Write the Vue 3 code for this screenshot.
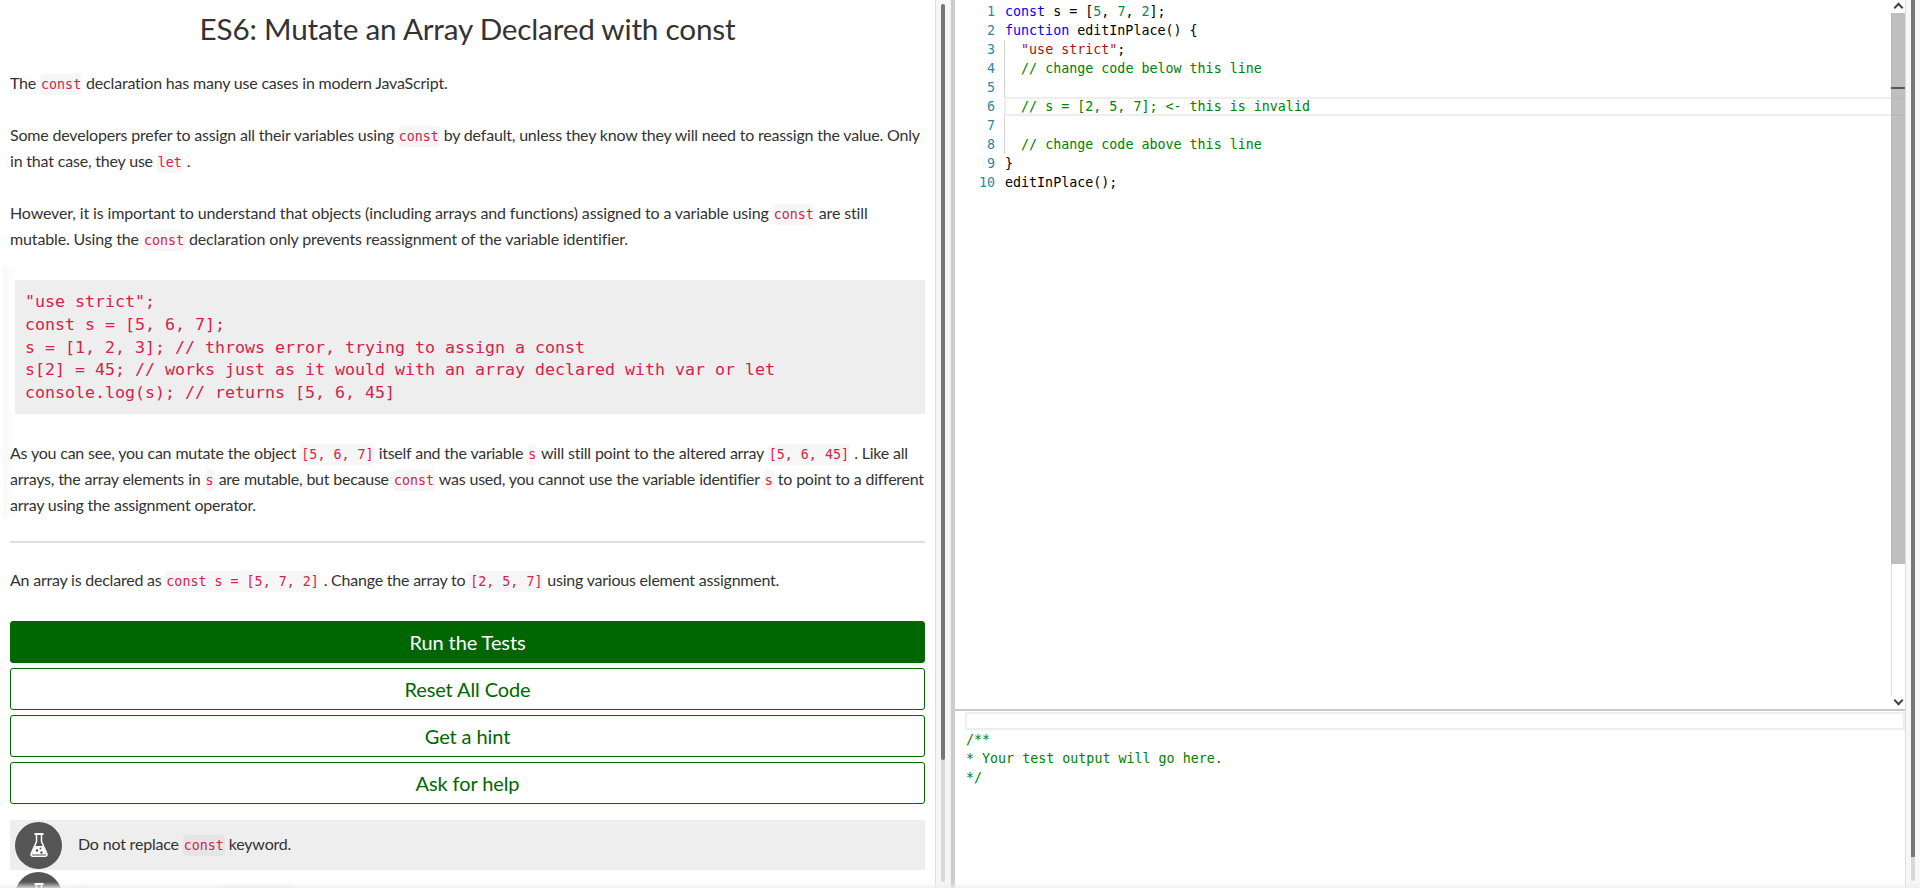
<script setup>
const lines = [
  [['k', 'const'], ['p', ' s = ['], ['n', '5'], ['p', ', '], ['n', '7'], ['p', ', '], ['n', '2'], ['p', '];']],
  [['k', 'function'], ['p', ' editInPlace() {']],
  [['p', '  '], ['s', '"use strict"'], ['p', ';']],
  [['p', '  '], ['c', '// change code below this line']],
  [['p', '']],
  [['p', '  '], ['c', '// s = [2, 5, 7]; <- this is invalid']],
  [['p', '']],
  [['p', '  '], ['c', '// change code above this line']],
  [['p', '}']],
  [['p', 'editInPlace();']],
]
const sample = `"use strict";
const s = [5, 6, 7];
s = [1, 2, 3]; // throws error, trying to assign a const
s[2] = 45; // works just as it would with an array declared with var or let
console.log(s); // returns [5, 6, 45]`
const output = ['/**', '* Your test output will go here.', '*/']
</script>

<template>
  <div class="app">
    <section class="left">
      <div class="content">
        <h1 class="title">ES6: Mutate an Array Declared with const</h1>
        <p>The <code>const</code> declaration has many use cases in modern JavaScript.</p>
        <p>Some developers prefer to assign all their variables using <code>const</code> by default, unless they know they will need to reassign the value. Only in that case, they use <code>let</code> .</p>
        <p class="before-sample">However, it is important to understand that objects (including arrays and functions) assigned to a variable using <code>const</code> are still mutable. Using the <code>const</code> declaration only prevents reassignment of the variable identifier.</p>
        <pre class="sample">{{ sample }}</pre>
        <p class="before-rule">As you can see, you can mutate the object <code>[5, 6, 7]</code> itself and the variable <code>s</code> will still point to the altered array <code>[5, 6, 45]</code> . Like all arrays, the array elements in <code>s</code> are mutable, but because <code>const</code> was used, you cannot use the variable identifier <code>s</code> to point to a different array using the assignment operator.</p>
        <hr class="rule" />
        <p class="task">An array is declared as <code>const s = [5, 7, 2]</code> . Change the array to <code>[2, 5, 7]</code> using various element assignment.</p>
        <div class="buttons">
          <button class="btn primary">Run the Tests</button>
          <button class="btn">Reset All Code</button>
          <button class="btn">Get a hint</button>
          <button class="btn">Ask for help</button>
        </div>
        <div class="hint shaded">
          <span class="badge">
            <svg viewBox="0 0 18 24" width="18" height="24">
              <rect x="4.500" y="0" width="9" height="2" fill="#fff" />
              <path fill="none" stroke="#fff" stroke-width="1.500" d="M6.500 2v6.500L1.200 20.500c-.6 1.300.2 2.700 1.700 2.700h12.200c1.500 0 2.300-1.400 1.700-2.700L11.500 8.500V2" />
              <path fill="#fff" d="M5 13h8l3.500 8.500H1.500z" />
              <circle cx="7" cy="17.500" r="1.300" fill="#555" />
              <circle cx="11.500" cy="19.500" r="1.200" fill="#555" />
              <circle cx="10.500" cy="15.500" r=".9" fill="#555" />
            </svg>
          </span>
          <span class="hint-text">Do not replace <code>const</code> keyword.</span>
        </div>
        <div class="hint">
          <span class="badge">
            <svg viewBox="0 0 18 24" width="18" height="24">
              <rect x="4.500" y="0" width="9" height="2" fill="#fff" />
              <path fill="none" stroke="#fff" stroke-width="1.500" d="M6.500 2v6.500L1.200 20.500c-.6 1.300.2 2.700 1.700 2.700h12.200c1.500 0 2.300-1.400 1.700-2.700L11.500 8.500V2" />
            </svg>
          </span>
          <span class="hint-text"><code>s</code> should be equal to <code>[2, 5, 7]</code>.</span>
        </div>
      </div>
      <div class="outer-track"><span class="outer-thumb"></span></div>
      <div class="splitter"></div>
      <div class="side-glow"></div>
    </section>

    <section class="right">
      <div class="editor">
        <div class="gutter">
          <div v-for="(_, i) in lines" :key="i" class="ln">{{ i + 1 }}</div>
        </div>
        <div class="code">
          <div v-for="(line, i) in lines" :key="i" class="line" :class="{ current: i === 5, guided: i >= 2 && i <= 7 }">
            <span v-for="(tok, j) in line" :key="j" :class="tok[0]">{{ tok[1] }}</span>
          </div>
        </div>
        <div class="vscroll">
          <span class="arrow up"></span>
          <div class="vtrack">
            <div class="vthumb"><span class="tick"></span></div>
          </div>
          <span class="arrow down"></span>
        </div>
      </div>
      <div class="output">
        <div class="output-bar"></div>
        <div v-for="l in output" :key="l" class="output-line">{{ l }}</div>
      </div>
    </section>

    <div class="page-track"><span class="page-thumb"></span></div>
    <div class="fade"></div>
  </div>
</template>

<style>
html, body { margin: 0; padding: 0; background: #fff; overflow: hidden; }
</style>

<style scoped>
.app {
  position: relative;
  display: flex;
  width: 1920px;
  height: 888px;
  overflow: hidden;
  background: #fff;
  font-family: Lato, "Liberation Sans", sans-serif;
  color: #333;
}
.left { position: relative; display: flex; width: 955px; flex: none; height: 888px; overflow: hidden; }
.content { width: 915px; padding: 0 10px; flex: none; position: relative; z-index: 1; }
.title {
  margin: 0;
  padding-top: 9px;
  height: 50px;
  font-size: 29.7px;
  line-height: 40px;
  font-weight: 400;
  letter-spacing: -0.2px;
  text-align: center;
  color: #333;
}
p { margin: 0 0 26px; font-size: 16px; line-height: 26px; color: #333; letter-spacing: -0.19px; }
.title + p { margin-top: 11px; }
.before-sample { margin-bottom: 28px; letter-spacing: -0.14px; }
.before-rule { margin-bottom: 23px; letter-spacing: -0.27px; word-spacing: 0.3px; }
.task { margin-bottom: 28px; letter-spacing: -0.22px; }
code {
  font-family: "DejaVu Sans Mono", "Liberation Mono", monospace;
  font-size: 13.33px;
  line-height: 1;
  letter-spacing: 0;
  word-spacing: 0;
  color: #d4234b;
  background: rgba(0, 0, 0, 0.035);
  border-radius: 4px;
  padding: 3px 1px;
}
.sample {
  margin: 0 0 26px 5px;
  padding: 11px 10px 9px;
  height: 114px;
  font-family: "DejaVu Sans Mono", "Liberation Mono", monospace;
  font-size: 16.62px;
  line-height: 22.75px;
  color: #d4234b;
  background: #eee;
}
.rule { margin: 0 0 24px; border: 0; border-top: 2px solid #ddd; }
.buttons { display: flex; flex-direction: column; gap: 5px; }
.btn {
  height: 42px;
  border: 1px solid #060;
  border-radius: 3px;
  background: #fff;
  color: #060;
  font: 400 20px/24px Lato, "Liberation Sans", sans-serif;
  letter-spacing: -0.1px;
  padding: 0;
}
.btn.primary { background: #060; color: #fff; }
.hint { display: flex; align-items: center; height: 50px; }
.buttons + .hint { margin-top: 16px; }
.hint.shaded { background: #eee; }
.badge {
  width: 47px;
  height: 47px;
  margin-left: 5px;
  border-radius: 50%;
  background: #555;
  display: flex;
  align-items: center;
  justify-content: center;
  flex: none;
}
.hint-text { margin: 0 0 2px 16px; font-size: 16px; line-height: 26px; color: #333; letter-spacing: -0.19px; }
.outer-track { width: 15px; flex: none; border-left: 1px solid #ddd; box-sizing: border-box; position: relative; background: #f6f6f6; }
.outer-track::before { content: ""; position: absolute; left: 5px; top: 4px; width: 4px; height: 878px; background: #d8d8d8; border-radius: 2px; }
.outer-thumb { position: absolute; left: 5px; top: 4px; width: 4px; height: 756px; background: #777; border-radius: 2px; }
.splitter { width: 5px; flex: none; background: #ccc; border-left: 1px solid #eee; box-sizing: border-box; }
.side-glow { position: absolute; left: 3px; top: 266px; width: 16px; height: 252px; background: linear-gradient(90deg, #f9f9f9, #fff); pointer-events: none; }

.right { width: 965px; flex: none; height: 888px; display: flex; flex-direction: column; }
.editor { display: flex; height: 709px; flex: none; border-bottom: 2px solid #c8c8c8; }
.gutter { width: 40px; flex: none; padding-top: 2px; text-align: right; color: #2e86a5; font: 13.33px/19px "DejaVu Sans Mono", monospace; }
.ln { height: 19px; }
.code { flex: 1; padding-left: 10px; padding-top: 2px; font: 13.33px/19px "DejaVu Sans Mono", monospace; color: #000; white-space: pre; min-width: 0; }
.line { height: 19px; position: relative; }
.line.guided { box-shadow: inset 1px 0 0 #d3d3d3; margin-left: -1px; padding-left: 1px; }
.line.current { margin-right: -60px; box-shadow: inset 0 0 0 2px #eee; }
.k { color: #00f; }
.n { color: #098658; }
.s { color: #a31515; }
.c { color: #008000; }
.vscroll { width: 14px; flex: none; margin-right: 15px; display: flex; flex-direction: column; position: relative; z-index: 1; }
.vtrack { flex: 1; border-left: 1px solid #ddd; min-height: 0; }
.vthumb { height: 551px; margin-left: -1px; background: rgba(170, 170, 170, 0.75); position: relative; }
.tick { position: absolute; left: 0; right: 0; top: 74px; height: 2px; background: #555; }
.arrow { height: 13px; flex: none; position: relative; display: block; }
.arrow::before {
  content: "";
  position: absolute;
  left: 4px;
  width: 5px;
  height: 5px;
  border-left: 2px solid #424242;
  border-top: 2px solid #424242;
  transform: rotate(45deg);
  top: 4px;
}
.arrow.down::before { transform: rotate(225deg); top: 1px; }
.output { flex: 1; padding: 1px 15px 0 10px; font: 13.33px/19px "DejaVu Sans Mono", monospace; color: #008000; white-space: pre; }
.output-bar { height: 14px; border: 2px solid #eee; }
.output-line { height: 19px; padding-left: 1px; }
.page-track { position: absolute; right: 0; top: 0; bottom: 0; width: 15px; box-sizing: border-box; border-left: 1px solid #ddd; background: #f6f7f6; }
.page-track::before { content: ""; position: absolute; left: 5px; top: 0; width: 4px; height: 881px; background: #d8d8d8; border-radius: 0 0 2px 2px; }
.page-thumb { position: absolute; left: 5px; top: 0; width: 4px; height: 857px; background: #777; }
.fade { position: absolute; left: 0; right: 0; bottom: 0; height: 6px; background: linear-gradient(rgba(238,238,238,0), rgba(238,238,238,.8)); pointer-events: none; z-index: 2; }
</style>
